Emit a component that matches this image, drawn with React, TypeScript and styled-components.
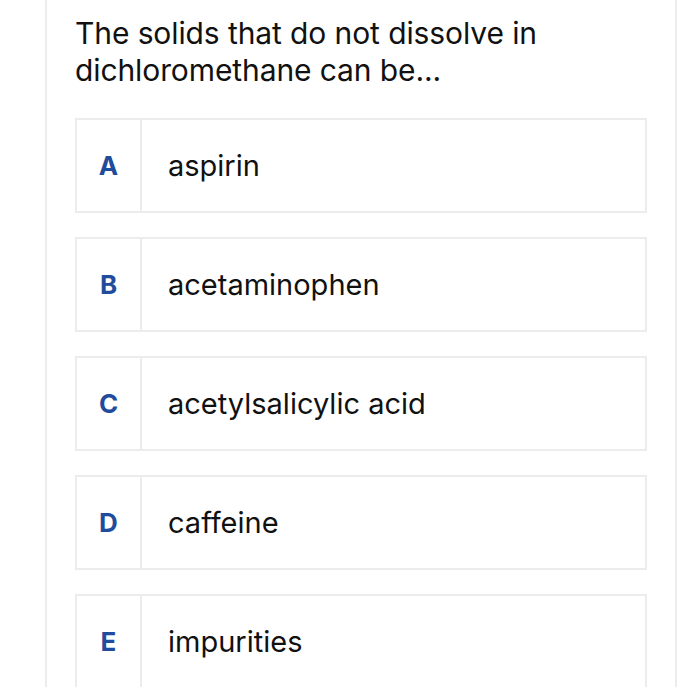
import React from "react";
import styled, { createGlobalStyle } from "styled-components";

const Global = createGlobalStyle`
  html, body { margin: 0; padding: 0; background: #ffffff; }
  body { font-family: Inter, "Noto Sans", sans-serif; -webkit-font-smoothing: antialiased; }
`;

const Panel = styled.div`
  margin-left: 45px;
  width: 632px;
  min-height: 687px;
  border-left: 2px solid #ececec;
  border-right: 2px solid #ececec;
  padding: 15px 28px 0 28px;
  box-sizing: border-box;
`;

const Question = styled.h1`
  margin: 0 0 29px 0;
  font-size: 30px;
  line-height: 37px;
  font-weight: 400;
  color: #111111;
  letter-spacing: -0.1px;
`;

const Options = styled.div`
  display: flex;
  flex-direction: column;
  gap: 24px;
`;

const Option = styled.div`
  display: flex;
  height: 95px;
  border: 2px solid #ececec;
  box-sizing: border-box;
  background: #fff;
`;

const Letter = styled.div`
  width: 63px;
  flex: none;
  display: flex;
  align-items: center;
  justify-content: center;
  border-right: 2px solid #ececec;
  font-size: 26px;
  font-weight: 700;
  color: #1f4c9c;
`;

const Label = styled.div`
  display: flex;
  align-items: center;
  padding-left: 26px;
  font-size: 29px;
  color: #111111;
`;

const items = [
  ["A", "aspirin"],
  ["B", "acetaminophen"],
  ["C", "acetylsalicylic acid"],
  ["D", "caffeine"],
  ["E", "impurities"],
];

export default function App() {
  return (
    <>
      <Global />
      <Panel>
        <Question>
          The solids that do not dissolve in
          <br />
          dichloromethane can be...
        </Question>
        <Options>
          {items.map(([l, t]) => (
            <Option key={l}>
              <Letter>{l}</Letter>
              <Label>{t}</Label>
            </Option>
          ))}
        </Options>
      </Panel>
    </>
  );
}
